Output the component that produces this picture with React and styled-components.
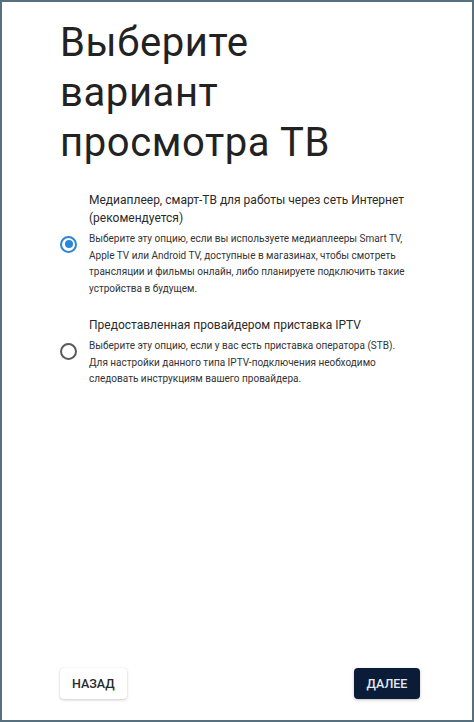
import React, { useState } from "react";
import styled, { createGlobalStyle } from "styled-components";

const Global = createGlobalStyle`
  html, body { margin: 0; padding: 0; }
  body { font-family: Roboto, "Noto Sans", Arial, sans-serif; background: #fff; }
  * { box-sizing: border-box; }
`;

const Frame = styled.div`
  width: 474px;
  height: 722px;
  border: 2px solid #56707f;
  background: #fff;
  display: flex;
  flex-direction: column;
  padding: 16px 52px 21px 58px;
`;

const Title = styled.h1`
  margin: 0;
  font-family: Roboto, sans-serif;
  font-weight: 400;
  font-size: 40px;
  letter-spacing: 0.6px;
  line-height: 50px;
  color: #222;
  width: 300px;
`;

const Options = styled.div`
  margin-top: 23px;
  display: flex;
  flex-direction: column;
  gap: 19px;
`;

const Option = styled.label`
  display: flex;
  align-items: center;
  gap: 12px;
  cursor: pointer;
`;

const Radio = styled.span`
  flex: 0 0 auto;
  width: 17px;
  height: 17px;
  border-radius: 50%;
  border: 2px solid ${(p) => (p.$checked ? "#2b86d9" : "#5a5a5a")};
  display: flex;
  align-items: center;
  justify-content: center;
  &::after {
    content: "";
    width: 8px;
    height: 8px;
    border-radius: 50%;
    background: ${(p) => (p.$checked ? "#2b86d9" : "transparent")};
  }
`;

const Texts = styled.div`
  display: flex;
  flex-direction: column;
  max-width: 320px;
`;

const OptionTitle = styled.div`
  font-size: 12px;
  line-height: 18px;
  color: #2a2a2a;
`;

const OptionDesc = styled.div`
  margin-top: 4px;
  font-size: 10px;
  line-height: 16.5px;
  color: #333;
`;

const Spacer = styled.div`
  flex: 1;
`;

const Footer = styled.div`
  display: flex;
  justify-content: space-between;
  align-items: center;
`;

const Button = styled.button`
  height: 31px;
  min-width: 66px;
  padding: 0 12px;
  border: none;
  border-radius: 4px;
  font-family: Roboto, sans-serif;
  font-weight: 500;
  font-size: 12.5px;
  text-transform: uppercase;
  cursor: pointer;
  background: ${(p) => (p.$primary ? "#0b1c38" : "#fff")};
  color: ${(p) => (p.$primary ? "#e4e8f0" : "#2a2a2a")};
  box-shadow: ${(p) =>
    p.$primary
      ? "0 1px 3px rgba(0,0,0,0.25)"
      : "0 1px 3px rgba(0,0,0,0.2), 0 0 1px rgba(0,0,0,0.1)"};
`;

const options = [
  {
    title: "Медиаплеер, смарт-ТВ для работы через сеть Интернет (рекомендуется)",
    desc: "Выберите эту опцию, если вы используете медиаплееры Smart TV, Apple TV или Android TV, доступные в магазинах, чтобы смотреть трансляции и фильмы онлайн, либо планируете подключить такие устройства в будущем.",
  },
  {
    title: "Предоставленная провайдером приставка IPTV",
    desc: "Выберите эту опцию, если у вас есть приставка оператора (STB). Для настройки данного типа IPTV-подключения необходимо следовать инструкциям вашего провайдера.",
  },
];

export default function App() {
  const [sel, setSel] = useState(0);
  return (
    <>
      <Global />
      <Frame>
        <Title>Выберите вариант просмотра ТВ</Title>
        <Options>
          {options.map((o, i) => (
            <Option key={i} onClick={() => setSel(i)}>
              <Radio $checked={sel === i} />
              <Texts>
                <OptionTitle>{o.title}</OptionTitle>
                <OptionDesc>{o.desc}</OptionDesc>
              </Texts>
            </Option>
          ))}
        </Options>
        <Spacer />
        <Footer>
          <Button>Назад</Button>
          <Button $primary>Далее</Button>
        </Footer>
      </Frame>
    </>
  );
}
